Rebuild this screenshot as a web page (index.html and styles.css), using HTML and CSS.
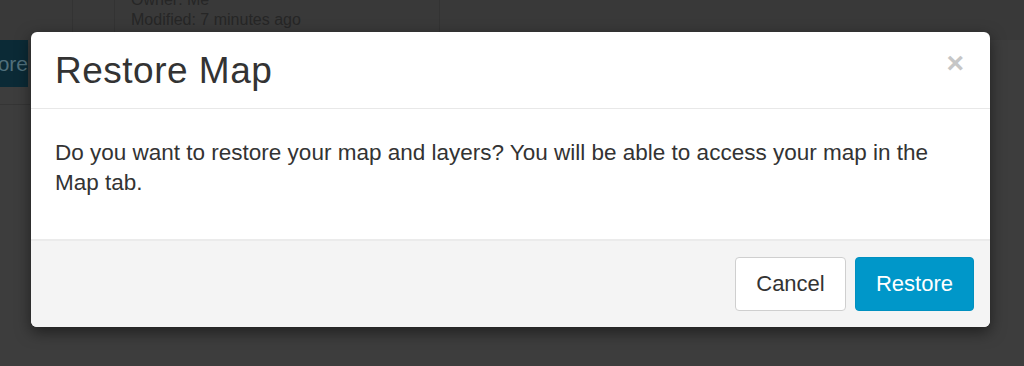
FILE: index.html
```html
<!DOCTYPE html>
<html>
<head>
<meta charset="utf-8">
<link rel="stylesheet" href="styles.css">
</head>
<body>
<div class="page">
  <div class="toprow">
    <div class="col-a"></div>
    <div class="col-b"></div>
    <div class="card">
      <div class="meta owner">Owner: Me</div>
      <div class="meta">Modified: 7 minutes ago</div>
    </div>
  </div>
  <div class="btnrow">
    <div class="bgbtn">ore</div>
  </div>
  <div class="rule"></div>
</div>
<div class="overlay">
  <div class="modal">
    <div class="modal-header">
      <h4 class="modal-title">Restore Map</h4>
      <span class="close">&times;</span>
    </div>
    <div class="modal-body">
      <p>Do you want to restore your map and layers? You will be able to access your map in the Map tab.</p>
    </div>
    <div class="modal-footer">
      <button class="btn btn-default">Cancel</button>
      <button class="btn btn-primary">Restore</button>
    </div>
  </div>
</div>
</body>
</html>
```
FILE: styles.css
```css
html, body {
  margin: 0;
  padding: 0;
}
body {
  width: 1024px;
  height: 366px;
  overflow: hidden;
  background: #3d3d3d;
  font-family: "Liberation Sans", Arial, Helvetica, sans-serif;
  position: relative;
}
.page {
  display: flex;
  flex-direction: column;
}
.toprow {
  display: flex;
  height: 40px;
  background: #393939;
}
.col-a {
  width: 72px;
  border-right: 1px solid #333;
}
.col-b {
  width: 41px;
  border-right: 1px solid #333;
}
.card {
  box-sizing: border-box;
  width: 325px;
  border-right: 1px solid #333;
  padding-left: 16px;
  margin-top: -10px;
}
.meta {
  font-size: 16px;
  line-height: 20px;
  color: #262626;
}
.btnrow {
  display: flex;
  height: 47px;
}
.bgbtn {
  width: 28px;
  background: #0b2a36;
  color: #51707c;
  font-size: 21px;
  line-height: 47px;
  text-align: right;
  overflow: hidden;
  white-space: nowrap;
  direction: rtl;
}
.rule {
  margin-top: 17px;
  width: 30px;
  height: 1px;
  background: #353535;
}
.overlay {
  position: absolute;
  left: 31px;
  top: 32px;
}
.modal {
  width: 959px;
  background: #fff;
  border-radius: 6px;
  box-shadow: 0 5px 15px rgba(0, 0, 0, 0.5);
  overflow: hidden;
  color: #333;
}
.modal-header {
  box-sizing: border-box;
  height: 77px;
  border-bottom: 1px solid #e8e8e8;
  display: flex;
  align-items: center;
  justify-content: space-between;
  padding: 0 26px 0 24px;
}
.modal-title {
  margin: 0;
  font-weight: normal;
  font-size: 37px;
  letter-spacing: 0.5px;
  color: #333;
  margin-top: 1px;
}
.close {
  font-size: 30px;
  font-weight: bold;
  color: #c6c6c6;
  line-height: 1;
  margin-top: -14px;
}
.modal-body {
  box-sizing: border-box;
  height: 130px;
  padding: 29px 24px 0 24px;
}
.modal-body p {
  margin: 0;
  font-size: 22.5px;
  line-height: 30px;
  color: #333;
}
.modal-footer {
  background: #f4f4f4;
  border-top: 2px solid #ebebeb;
  display: flex;
  justify-content: flex-end;
  gap: 9px;
  padding: 16px 16px 16px 0;
}
.btn {
  height: 54px;
  border-radius: 4px;
  font-family: "Liberation Sans", Arial, Helvetica, sans-serif;
  font-size: 22px;
  padding: 0;
  cursor: pointer;
}
.btn-default {
  width: 111px;
  background: #fff;
  border: 1px solid #cfcfcf;
  color: #333;
}
.btn-primary {
  width: 119px;
  background: #0097c9;
  border: 1px solid #0090c0;
  color: #fff;
}
```
